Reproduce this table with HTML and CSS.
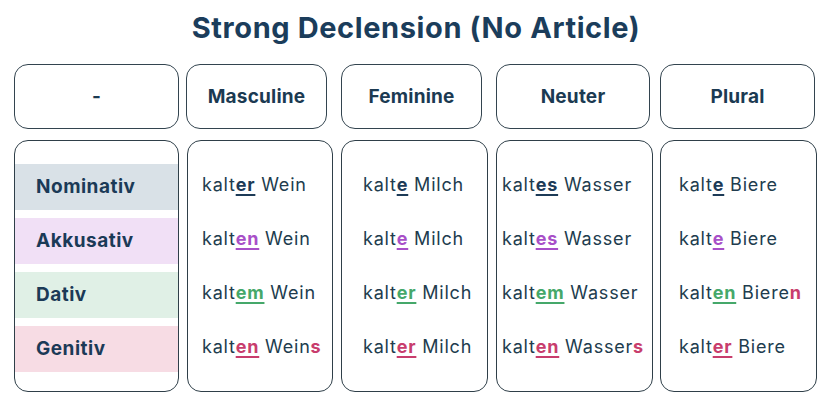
FILE: index.html
```html
<!DOCTYPE html>
<html lang="de">
<head>
<meta charset="utf-8">
<link rel="stylesheet" href="styles.css">
</head>
<body>
<div class="page">
  <h1 class="title">Strong Declension (No Article)</h1>
  <div class="head-row">
    <div class="hcell h1c">-</div>
    <div class="hcell h2c">Masculine</div>
    <div class="hcell h3c">Feminine</div>
    <div class="hcell h4c">Neuter</div>
    <div class="hcell h5c">Plural</div>
  </div>
  <div class="body-row">
    <div class="col b1c">
      <div class="case nom">Nominativ</div>
      <div class="case akk">Akkusativ</div>
      <div class="case dat">Dativ</div>
      <div class="case gen">Genitiv</div>
    </div>
    <div class="col forms b2c">
      <div class="form">kalt<span class="end e-nom">er</span> Wein</div>
      <div class="form">kalt<span class="end e-akk">en</span> Wein</div>
      <div class="form">kalt<span class="end e-dat">em</span> Wein</div>
      <div class="form">kalt<span class="end e-gen">en</span> Wein<span class="ext">s</span></div>
    </div>
    <div class="col forms b3c">
      <div class="form">kalt<span class="end e-nom">e</span> Milch</div>
      <div class="form">kalt<span class="end e-akk">e</span> Milch</div>
      <div class="form">kalt<span class="end e-dat">er</span> Milch</div>
      <div class="form">kalt<span class="end e-gen">er</span> Milch</div>
    </div>
    <div class="col forms b4c">
      <div class="form">kalt<span class="end e-nom">es</span> Wasser</div>
      <div class="form">kalt<span class="end e-akk">es</span> Wasser</div>
      <div class="form">kalt<span class="end e-dat">em</span> Wasser</div>
      <div class="form">kalt<span class="end e-gen">en</span> Wasser<span class="ext">s</span></div>
    </div>
    <div class="col forms b5c">
      <div class="form">kalt<span class="end e-nom">e</span> Biere</div>
      <div class="form">kalt<span class="end e-akk">e</span> Biere</div>
      <div class="form">kalt<span class="end e-dat">en</span> Biere<span class="ext">n</span></div>
      <div class="form">kalt<span class="end e-gen">er</span> Biere</div>
    </div>
  </div>
</div>
</body>
</html>
```
FILE: styles.css
```css
* { box-sizing: border-box; }
html, body { margin: 0; padding: 0; background: #ffffff; }
body { font-family: Inter, "Noto Sans", sans-serif; color: #213c4e; }
.page { width: 832px; height: 406px; padding-left: 14px; }
.title {
  margin: 0;
  height: 56px;
  line-height: 56px;
  padding-right: 14px;
  text-align: center;
  font-size: 29px;
  font-weight: 700;
  color: #1b3d5b;
  letter-spacing: 0.6px;
}
.head-row { display: flex; margin-top: 8px; height: 65px; align-items: stretch; }
.hcell {
  border: 1.5px solid #33444f;
  border-radius: 14px;
  display: flex;
  align-items: center;
  justify-content: center;
  font-size: 19px;
  font-weight: 700;
  letter-spacing: 0.2px;
  color: #1b3a52;
}
.h1c { width: 165px; }
.h2c { width: 141px; margin-left: 7px; }
.h3c { width: 141px; margin-left: 14px; }
.h4c { width: 154px; margin-left: 14px; }
.h5c { width: 155px; margin-left: 10px; }

.body-row { display: flex; margin-top: 11px; height: 252px; }
.col {
  border: 1.5px solid #2f3f49;
  border-radius: 14px;
  display: flex;
  flex-direction: column;
  gap: 8px;
  padding-top: 22.5px;
}
.forms { padding-top: 20px; }
.b1c { width: 165px; }
.b2c { width: 146px; margin-left: 8px; padding-left: 14px; }
.b3c { width: 147px; margin-left: 8px; padding-left: 21px; }
.b4c { width: 157px; margin-left: 8px; padding-left: 5px; }
.b5c { width: 157px; margin-left: 7px; padding-left: 18px; }

.case {
  height: 46px;
  display: flex;
  align-items: center;
  padding-left: 21px;
  font-size: 19px;
  font-weight: 700;
  letter-spacing: 0.5px;
  color: #1b3a57;
}
.nom { background: #d9e1e7; }
.akk { background: #f1e0f6; }
.dat { background: #e0f0e6; }
.gen { background: #f7dce4; }

.form {
  height: 46px;
  display: flex;
  align-items: center;
  font-size: 18px;
  font-weight: 400;
  letter-spacing: 0.8px;
  color: #213c4e;
  white-space: pre;
}
.end {
  font-weight: 700;
  text-decoration: underline;
  text-decoration-thickness: 2px;
  text-underline-offset: 3px;
}
.e-nom { color: #1d3b57; }
.e-akk { color: #a84fc8; }
.e-dat { color: #45a86a; }
.e-gen { color: #c83d6d; }
.ext { font-weight: 700; color: #c83d6d; }
```
